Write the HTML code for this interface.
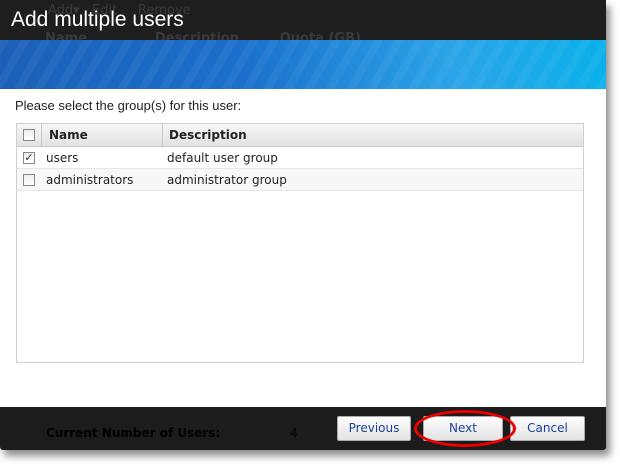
<!DOCTYPE html>
<html><head><style>
*{margin:0;padding:0;box-sizing:border-box}
body{width:620px;height:470px;background:#fff;font-family:"DejaVu Sans","Liberation Sans",sans-serif;position:relative;overflow:hidden}
.win{position:absolute;left:0;top:0;width:606px;height:450px;background:#1c1c1c;box-shadow:4px 6px 8px rgba(0,0,0,.45);border-radius:0 0 3px 3px}
.title{position:absolute;left:0;top:0;width:606px;height:40px;background:#1e1e1e}
.title h1{position:absolute;left:11px;top:8px;font-family:"Liberation Sans",sans-serif;font-weight:normal;font-size:21px;color:#fff}
.ghost{position:absolute;color:#3a3a3a;font-size:13px}
.banner{position:absolute;left:0;top:40px;width:606px;height:49px;background:repeating-linear-gradient(120deg,rgba(255,255,255,.05) 0 8px,rgba(255,255,255,0) 8px 18px),linear-gradient(90deg,#1b5fb8 0%,#1a70cc 40%,#2aa4e8 75%,#0ab0ea 100%)}
.body{position:absolute;left:0;top:89px;width:606px;height:318px;background:#fff}
.body p{position:absolute;left:15px;top:9px;font-size:13px;font-family:"Liberation Sans",sans-serif;color:#222}
.tbl{position:absolute;left:16px;top:34px;width:568px;height:240px;border:1px solid #cfcfcf}
.hd{height:23px;background:linear-gradient(#f6f6f6,#e2e2e2);border-bottom:1px solid #c8c8c8;position:relative;font-weight:bold;font-size:12px;color:#222}
.row{height:22px;border-bottom:1px solid #e6e6e6;position:relative;font-size:12px;color:#222}
.row:nth-child(3){background:#f7f7f7}
.cb{position:absolute;left:6px;top:5px;width:12px;height:12px;border:1px solid #888;background:linear-gradient(#eee,#fff)}
.c1{position:absolute;left:29px;top:4px}
.c2{position:absolute;left:150px;top:4px}
.sep{position:absolute;top:0;height:23px;border-left:1px solid #c8c8c8}
.btn{position:absolute;top:416px;height:25px;background:linear-gradient(#fdfdfd,#e3e3e3);border:1px solid #aaa;border-radius:2px;color:#1b3f9b;font-size:12px;text-align:center;line-height:23px}
.oval{position:absolute;left:414px;top:410px;width:102px;height:37px;border:3px solid #e00;border-radius:50%}
</style></head><body>
<div class="win">
<div class="title">
<span class="ghost" style="left:48px;top:3px">Add▾ &nbsp; Edit &nbsp; &nbsp; Remove</span>
<span class="ghost" style="left:45px;top:31px;font-weight:bold">Name &nbsp; &nbsp; &nbsp; &nbsp; &nbsp; &nbsp; &nbsp; Description &nbsp; &nbsp; &nbsp; &nbsp; Quota (GB)</span>
<h1>Add multiple users</h1></div>
<div class="banner"></div>
<div class="body">
<p>Please select the group(s) for this user:</p>
<div class="tbl">
<div class="hd"><span class="cb" style="top:5px"></span><span class="sep" style="left:24px"></span><span class="c1" style="left:32px">Name</span><span class="sep" style="left:145px"></span><span class="c2" style="left:152px">Description</span></div>
<div class="row"><span class="cb" style="color:#334;font-size:11px;line-height:10px;text-align:center">✓</span><span class="c1">users</span><span class="c2">default user group</span></div>
<div class="row"><span class="cb"></span><span class="c1">administrators</span><span class="c2">administrator group</span></div>
</div>
</div>
<span class="ghost" style="left:46px;top:426px;font-weight:bold;font-size:12px;color:#000">Current Number of Users:</span>
<span class="ghost" style="left:290px;top:426px;font-size:12px;color:#000">4</span>
</div>
<div class="btn" style="left:337px;width:74px">Previous</div>
<div class="btn" style="left:423px;width:80px">Next</div>
<div class="btn" style="left:510px;width:75px">Cancel</div>
<div class="oval"></div>
</body></html>
